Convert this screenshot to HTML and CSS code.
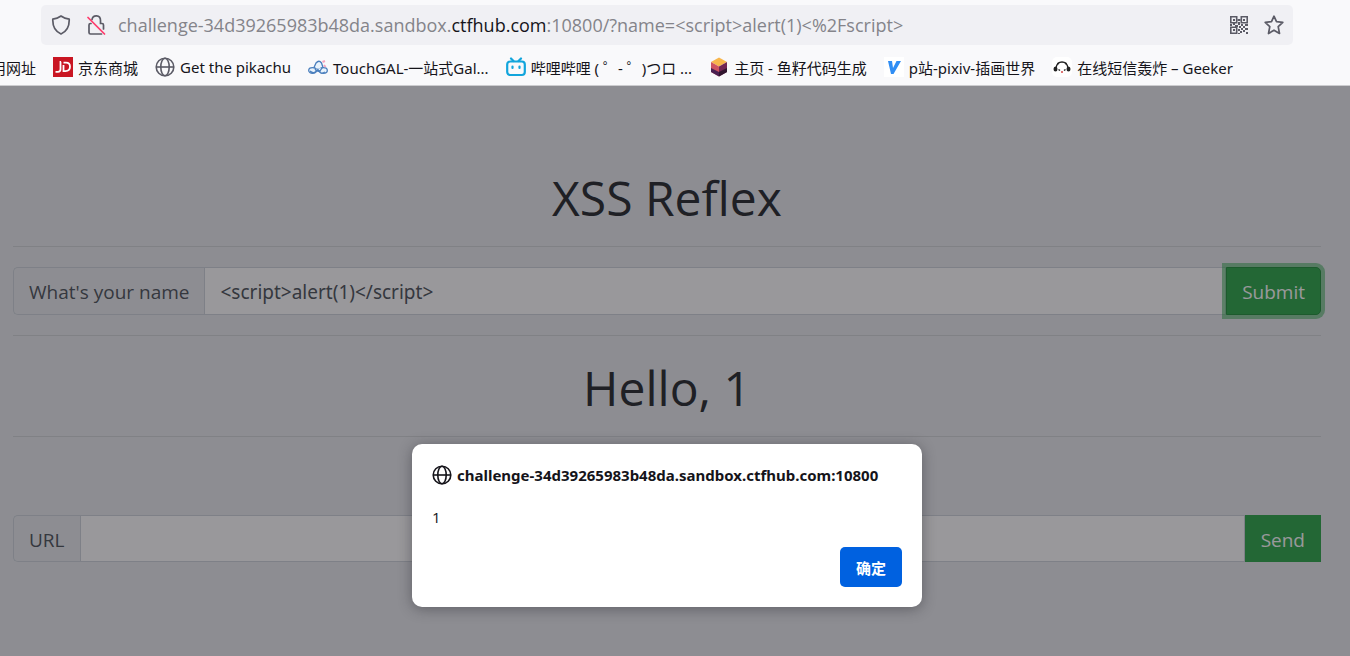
FILE: index.html
```html
<!DOCTYPE html>
<html lang="zh-CN">
<head>
    <meta charset="UTF-8">
    <meta name="viewport" content="width=device-width, initial-scale=1.0">
    <title>XSS Reflex</title>
    <link rel="stylesheet" href="styles.css">
</head>
<body>
    <header class="toolbar">
        <div class="url-bar">
            <svg class="icon" viewBox="0 0 20 20" fill="none" stroke="#5b5b66" stroke-width="1.7" stroke-linejoin="round">
                <path d="M10 1 C12.2 2.6 15 3.7 18.2 4.2 C18.5 11.5 15.5 16.6 10 19 C4.5 16.6 1.5 11.5 1.8 4.2 C5 3.7 7.8 2.6 10 1z"/>
            </svg>
            <svg class="icon icon-lock" viewBox="0 0 20 20" fill="none" stroke="#5b5b66" stroke-width="1.7" stroke-linecap="round">
                <path d="M6 4.5 C7 -0.4 14.5 -0.4 14.5 5.5 V8.5 H16 Q17.5 8.5 17.5 10 V14 M5 8.5 H4.5 Q3 8.5 3 10 V17.5 Q3 19 4.5 19 H15.5"/>
                <path d="M2 2.5 L18.5 19" stroke="#ff3b6b"/>
            </svg>
            <a class="url" href="#">challenge-34d39265983b48da.sandbox.<strong>ctfhub.com</strong>:10800/?name=&lt;script&gt;alert(1)&lt;%2Fscript&gt;</a>
            <button class="icon-button" type="button" aria-label="QR">
                <svg class="icon" viewBox="0 0 20 20" fill="none" stroke="#5b5b66" stroke-width="1.6">
                    <path d="M1.8 1.8h5.9v5.9H1.8zM12.3 1.8h5.9v5.9h-5.9zM1.8 12.3h5.9v5.9H1.8z"/>
                    <path fill="#5b5b66" stroke="none" d="M4 4h2v2H4zM14 4h2v2h-2zM4 14h2v2H4zM8.5 4h3v2h-3zM9 7h2v3H9zM1 9h2v2H1zM4 8h2v2H4zM6 10h3v2H6zM12 9h2v2h-2zM16 9h3v2h-3zM10 11h2v2h-2zM14 11h2v2h-2zM12 13h2v2h-2zM16 13h3v2h-3zM9 14h2v2H9zM14 15h2v2h-2zM11 16h2v2h-2zM9 18h2v1H9zM17 17h2v2h-2z"/>
                </svg>
            </button>
            <button class="icon-button" type="button" aria-label="Bookmark">
                <svg class="icon" viewBox="0 0 20 20" fill="none" stroke="#5b5b66" stroke-width="1.7" stroke-linejoin="round">
                    <path d="M10 1.2 L12.5 6.7 L18.8 7.3 L14.2 11.7 L15.5 18.5 L10 15.2 L4.5 18.5 L5.8 11.7 L1.2 7.3 L7.5 6.7z"/>
                </svg>
            </button>
        </div>
        <nav class="bookmarks">
            <a href="#">用网址</a>
            <a href="#">
                <svg class="icon" viewBox="0 0 20 20"><path fill="#c91623" d="M0 0h20v20H0z"/><path fill="none" stroke="#fff" stroke-width="1.8" d="M8 4.8h-.5v7.5q0 2.5-2.5 2.5H2.5M10.5 5.6h2.5q4 0 4 4.2t-4.5 4.3h-2V8"/></svg>
                京东商城
            </a>
            <a href="#">
                <svg class="icon" viewBox="0 0 20 20" fill="none" stroke="#5b5b66" stroke-width="1.6"><circle cx="10" cy="10" r="8.8"/><ellipse cx="10" cy="10" rx="4.2" ry="8.8"/><path d="M1 10h18"/></svg>
                Get the pikachu
            </a>
            <a href="#">
                <svg class="icon" viewBox="0 0 20 20" fill="#e9f3fc" stroke="#4b7fbd" stroke-width="1.3" stroke-linejoin="round">
                    <path d="M6 10.500 L8 6 Q11 2.500 13.500 6 L15 10.500 Q12 13 7 11.500z"/>
                    <ellipse cx="4.5" cy="13.500" rx="3.800" ry="2.800"/><ellipse cx="15.5" cy="13.500" rx="3.800" ry="2.800"/>
                    <path d="M2 14 Q6 18 10 12.5 Q12 18 17 15 M7 12 Q11 17 14 11"/>
                    <path stroke="#f5a3bd" stroke-width="2" d="M14.5 5 L17 4 M16 8 L17.5 10"/>
                </svg>
                TouchGAL-一站式Gal...
            </a>
            <a href="#">
                <svg class="icon" viewBox="0 0 20 20" fill="none" stroke="#12a5dc" stroke-width="2.2" stroke-linecap="round"><path d="M5 1.5 L7.5 4 M15 1.5 L12.5 4"/><rect x="1.2" y="4.5" width="17.6" height="13.5" rx="3"/><path d="M6.5 9.5v1.5M13.5 9.5v1.5"/></svg>
                哔哩哔哩 ( ゜- ゜)つロ ...
            </a>
            <a href="#">
                <svg class="icon" viewBox="0 0 20 20"><path fill="#f8b64c" d="M10 .5 18 5 10 9.5 2 5z"/><path fill="#cf5360" d="M2 5 10 9.5V19.5L2 15z"/><path fill="#722653" d="M18 5 10 9.5V19.5L18 15z"/><path fill="#4a2051" d="M2 11 10 15V19.5L2 15z"/><path fill="#31162f" d="M18 11 10 15V19.5L18 15z"/></svg>
                主页 - 鱼籽代码生成
            </a>
            <a href="#">
                <svg class="icon" viewBox="0 0 20 20"><path fill="#fff" d="M0 0h20v20H0z"/><path fill="#2f8df4" d="M4 4h4l1 7L12.5 4H17L9.5 17H7z"/></svg>
                p站-pixiv-插画世界
            </a>
            <a href="#">
                <svg class="icon" viewBox="0 0 20 20"><rect width="20" height="20" rx="5" fill="#fff"/><path fill="none" stroke="#222" stroke-width="1.3" d="M4 11 Q5 5 10 5 Q15 5 16 11"/><path fill="#222" d="M5 6l3-1-2 3zM15 6l-3-1 2 3z"/><ellipse cx="3.5" cy="12" rx="2" ry="2.5" fill="#222"/><ellipse cx="16.5" cy="12" rx="2" ry="2.5" fill="#222"/><path stroke="#222" stroke-width="1.5" d="M6.5 12.5l1.5 1M13.5 12.5l-1.5 1"/><circle cx="10" cy="15" r="1" fill="#d34646"/></svg>
                在线短信轰炸 – Geeker
            </a>
        </nav>
    </header>

    <main class="page">
        <h1>XSS Reflex</h1>
        <hr>
        <form class="input-group">
            <label for="name">What's your name</label>
            <input id="name" type="text" value="&lt;script&gt;alert(1)&lt;/script&gt;">
            <button class="btn btn-focus" type="button">Submit</button>
        </form>
        <hr>
        <h1>Hello, 1</h1>
        <hr>
        <form class="input-group url-group">
            <label for="url">URL</label>
            <input id="url" type="text">
            <button class="btn btn-square" type="button">Send</button>
        </form>
        <div class="backdrop">
            <div class="dialog" role="dialog" aria-labelledby="dialog-title">
                <div class="dialog-title" id="dialog-title">
                    <svg class="icon" viewBox="0 0 20 20" fill="none" stroke="#15141a" stroke-width="1.6"><circle cx="10" cy="10" r="8.8"/><ellipse cx="10" cy="10" rx="4.2" ry="8.8"/><path d="M1 10h18"/></svg>
                    challenge-34d39265983b48da.sandbox.ctfhub.com:10800
                </div>
                <p>1</p>
                <button class="dialog-ok" type="button">确定</button>
            </div>
        </div>
    </main>
</body>
</html>
```
FILE: styles.css
```css
* {
    box-sizing: border-box;
}

body {
    margin: 0;
    min-height: 100vh;
    display: flex;
    flex-direction: column;
    font-family: "Open Sans", "Noto Sans CJK SC", sans-serif;
    background: #e9ecef;
}

a {
    color: inherit;
    text-decoration: none;
}

button, input {
    font: inherit;
}

.icon {
    width: 20px;
    height: 20px;
    flex: none;
}

/* browser toolbar */
.toolbar {
    background: #f9f9fb;
    border-bottom: 1px solid #cccccf;
    padding-top: 5px;
    overflow: hidden;
}

.url-bar {
    display: flex;
    align-items: center;
    height: 40px;
    margin: 0 57px 0 41px;
    padding: 0 9px 0 10px;
    background: #f0f0f4;
    border-radius: 5px;
}

.icon-lock {
    margin-left: 15px;
}

.url {
    flex: 1;
    margin-left: 12px;
    font-size: 18px;
    color: #84848a;
    white-space: nowrap;
}

.url strong {
    font-weight: normal;
    color: #15141a;
}

.icon-button {
    display: flex;
    margin-left: 15px;
    padding: 0;
    border: 0;
    background: none;
}

.bookmarks {
    display: flex;
    gap: 17px;
    height: 40px;
    margin-left: -9px;
    padding-top: 6px;
    font-family: "Noto Sans", "Noto Sans CJK SC", sans-serif;
    font-size: 15px;
    color: #15141a;
    white-space: nowrap;
}

.bookmarks a {
    display: flex;
    align-items: center;
    gap: 5px;
    height: 32px;
}

/* challenge page */
.page {
    position: relative;
    flex: 1;
    padding: 80px 29px 0 13px;
    color: #212529;
}

h1 {
    margin: 0 0 16px;
    font-size: 48px;
    font-weight: normal;
    line-height: 64px;
    text-align: center;
}

hr {
    margin: 0 0 20px;
    border: 0;
    border-top: 1px solid #d2d5d7;
}

.input-group {
    display: flex;
    height: 48px;
    margin-bottom: 20px;
    font-size: 19px;
}

.input-group label {
    display: flex;
    align-items: center;
    padding: 2px 15px 0;
    color: #495057;
    background: #e9ecef;
    border: 1px solid #ced4da;
    border-right: 0;
    border-radius: 5px 0 0 5px;
}

.input-group input {
    flex: 1;
    min-width: 0;
    padding: 2px 15px 0;
    font-family: "Noto Sans", sans-serif;
    color: #495057;
    background: #fff;
    border: 1px solid #ced4da;
    border-radius: 0;
}

.btn {
    padding: 2px 16px 0;
    color: #fff;
    background: #28a745;
    border: 0;
    border-radius: 0 5px 5px 0;
}

.btn-focus {
    padding: 2px 15px 0;
    border: 1px solid #1e8e38;
    box-shadow: 0 0 0 4px rgba(40, 167, 69, 0.5);
}

.btn-square {
    border-radius: 0;
}

.url-group {
    height: 47px;
    margin-top: 78px;
}

/* alert */
.backdrop {
    position: absolute;
    inset: 0;
    display: flex;
    align-items: flex-end;
    justify-content: center;
    padding: 0 16px 49px 0;
    background: rgba(28, 27, 34, 0.45);
}

.dialog {
    display: flex;
    flex-direction: column;
    width: 510px;
    padding: 20px;
    color: #15141a;
    font-size: 15px;
    background: #fff;
    border-radius: 10px;
    box-shadow: 0 2px 14px rgba(28, 27, 34, 0.4);
}

.dialog-title {
    display: flex;
    align-items: center;
    gap: 5px;
    height: 22px;
    font-family: "Noto Sans", sans-serif;
    font-weight: bold;
}

.dialog p {
    margin: 20px 0 19px;
    line-height: 22px;
}

.dialog-ok {
    align-self: flex-end;
    height: 40px;
    padding: 0 16px;
    color: #fff;
    font-weight: bold;
    background: #0061e0;
    border: 0;
    border-radius: 5px;
}
```
